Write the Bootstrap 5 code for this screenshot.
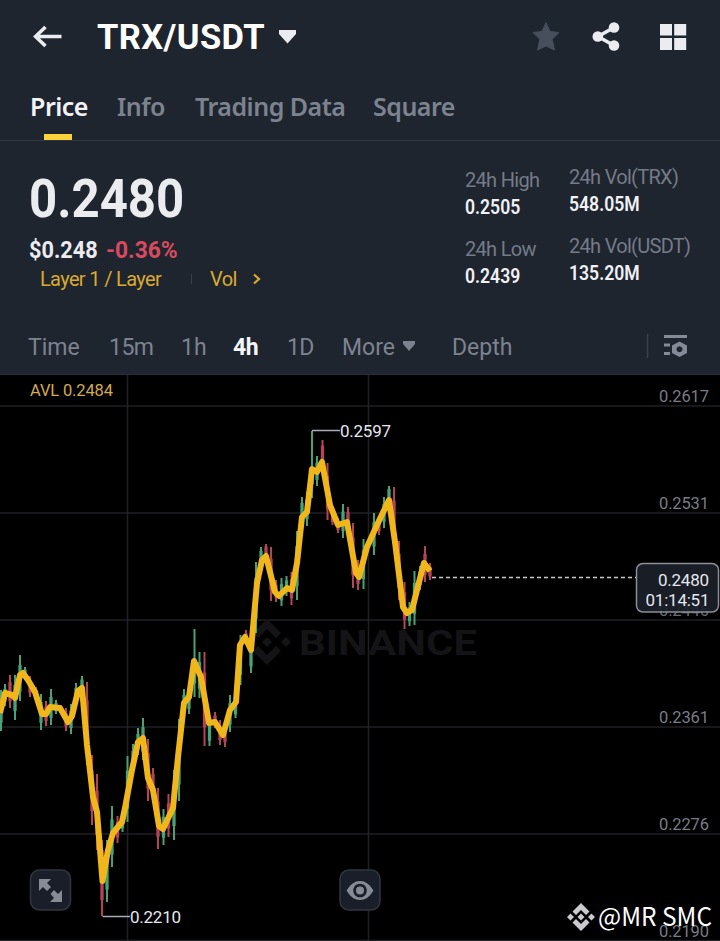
<!DOCTYPE html>
<html lang="en" data-bs-theme="dark">
<head>
<meta charset="utf-8">
<meta name="viewport" content="width=device-width, initial-scale=1">
<title>TRX/USDT</title>
<link href="https://cdn.jsdelivr.net/npm/bootstrap@5.3.0/dist/css/bootstrap.min.css" rel="stylesheet">
<style>
body{width:720px;height:941px;overflow:hidden;background:#000;font-family:Roboto,"Liberation Sans",sans-serif;color:#eaecef;line-height:1}
.panel{background:#1f252f;height:375px;border-bottom:1px solid #2a2f39}
.topbar{height:74px;padding:0 33px}
.pair{font-size:34.5px;font-weight:700;color:#fff;margin-left:35px;width:166px;white-space:nowrap;letter-spacing:.4px;padding-top:2px}
.tabs{height:67px;padding:0 30px;border-bottom:1px solid #303641}
.tabs .nav-link{padding:18px 0 0;font:600 25px/28px "Noto Sans",sans-serif;letter-spacing:-.5px;color:#7c838f;position:relative;white-space:nowrap}
.tabs .t1{width:87px}.tabs .t2{width:78px}.tabs .t3{width:178px}
.tabs .nav-link.active{color:#f2f3f7}
.tabs .nav-link.active::after{content:"";position:absolute;left:14px;bottom:0;width:28px;height:6px;background:#f8d33a}
.summary{height:178px;padding:0 0 0 29px}
.squeeze{display:inline-block;transform-origin:left center;white-space:nowrap}
.last{font-size:54px;font-weight:700;line-height:58px;padding-top:29px;height:75px}
.last .squeeze{transform:scaleX(.91)}
.sub{font-size:24px;font-weight:700;line-height:28px;margin-top:20px}
.usd{width:77px}.usd .squeeze{transform:scaleX(.905)}
.chg{color:#d84a5f}.chg .squeeze{transform:scaleX(.95)}
.tags{font-size:20px;line-height:24px;color:#d9aa30;padding-left:11px;margin-top:3px}
.tags span{letter-spacing:-.65px;white-space:pre}
.stats{width:255px;font-size:20px;line-height:24px}
.stat-a{width:104px;padding-top:27px}.stat-b{padding-top:24px}
.stat-k{color:#747b87;white-space:nowrap;letter-spacing:-.7px}
.stat-v{font-weight:600;margin-top:3px;margin-bottom:18px;color:#f0f1f5}
.stat-v .squeeze{transform:scaleX(.88)}
.frames{height:55px;padding:1px 0 0 28px;font-size:23px;color:#7c838f;white-space:nowrap}
.frames .on{color:#f5f6fa;font-weight:700}
.f-time{width:81px}.f-15{width:72px;letter-spacing:-.5px}.f-1h{width:52px}.f-4h{width:54px;letter-spacing:-.5px}.f-1d{width:55px;letter-spacing:-.7px}.f-more{width:52px}
.frames .caret{margin:0 37px 2px 9px}
.chart{height:566px;display:block}
.chart text{font-family:Roboto,sans-serif}
.chart .handle{font-family:"Noto Sans CJK SC","Noto Sans",sans-serif}
</style>
</head>
<body>
<main class="d-flex flex-column">
<section class="panel">
  <header class="topbar d-flex align-items-center">
    <svg width="29" height="24" viewBox="0 0 29 24" fill="none" stroke="#eaecf2" stroke-width="3.6"><path d="M28.500 11.500H3M12.500 2 2.500 11.500l10 9.500"/></svg>
    <h1 class="pair mb-0">TRX/USDT</h1>
    <svg class="ms-3" width="17" height="14" viewBox="0 0 17 14"><path d="M0 0H17V4L8.500 13.500 0 4Z" fill="#eaecf2"/></svg>
    <div class="ms-auto d-flex align-items-center">
      <svg width="28" height="30" viewBox="0 .5 28 30" fill="#474e5c" stroke="#474e5c" stroke-linejoin="round"><path d="m14 1 4 9 9 1-6.800 6.800L22.500 28.500 14 24.500 5.500 28.500 7.800 17.800 1 11l9-1Z"/></svg>
      <svg class="ms-4" width="40" height="30" viewBox="-8 .5 40 30" fill="#eaecf2"><path d="M22 6 6 15l16 9" fill="none" stroke="#eaecf2" stroke-width="3.600"/><circle cx="5.800" cy="15" r="5.300"/><circle cx="22" cy="6" r="5.300"/><circle cx="22" cy="24" r="5.300"/></svg>
      <svg class="ms-4" width="39" height="27" viewBox="-12 .5 39 27" fill="#eaecf2"><path d="M0 0h12v12H0ZM14.200 0h12v12h-12ZM0 14.500h12v12H0ZM14.200 14.500h12v12h-12Z"/></svg>
    </div>
  </header>
  <nav class="tabs nav flex-nowrap">
    <a class="nav-link t1 active">Price</a><a class="nav-link t2">Info</a><a class="nav-link t3">Trading Data</a><a class="nav-link">Square</a>
  </nav>
  <div class="summary d-flex justify-content-between">
    <div>
      <div class="last"><span class="squeeze">0.2480</span></div>
      <div class="sub d-flex"><div class="usd"><span class="squeeze">$0.248</span></div><div class="chg"><span class="squeeze">-0.36%</span></div></div>
      <div class="tags d-flex align-items-center"><span>Layer 1 / Layer</span>
        <svg width="49" height="14" viewBox="0 0 49 14"><path d="M30.500 2v10" stroke="#3a404b"/></svg><span>Vol</span>
        <svg class="ms-3" width="8" height="12" viewBox="0 0 8 12" fill="none" stroke="#d9aa30" stroke-width="2.200"><path d="m1 1.500 5 4.500-5 4.500"/></svg></div>
    </div>
    <div class="stats d-flex">
      <div class="stat-a"><div class="stat-k">24h High</div><div class="stat-v"><span class="squeeze">0.2505</span></div><div class="stat-k">24h Low</div><div class="stat-v"><span class="squeeze">0.2439</span></div></div>
      <div class="stat-b"><div class="stat-k">24h Vol(TRX)</div><div class="stat-v"><span class="squeeze">548.05M</span></div><div class="stat-k">24h Vol(USDT)</div><div class="stat-v"><span class="squeeze">135.20M</span></div></div>
    </div>
  </div>
  <div class="frames d-flex align-items-center">
    <span class="f-time">Time</span><span class="f-15">15m</span><span class="f-1h">1h</span><span class="f-4h on">4h</span><span class="f-1d">1D</span><span class="f-more">More</span>
    <svg width="12" height="10" viewBox="0 0 12 10" class="caret"><path d="M0 0h12v3L6 10 0 3Z" fill="#7c838f"/></svg><span>Depth</span>
    <svg class="ms-auto me-4" width="57" height="28" viewBox="639 333 57 28"><path d="M648 334v24" stroke="#3a404b" stroke-width="1.500" transform="translate(-.5)"/><path d="M664 336.500h23M664 345h6M664 353.500h6" stroke="#858b97" stroke-width="3" fill="none"/><path fill-rule="evenodd" fill="#858b97" d="m679.500 341.500 7.500 4v7.500l-7.500 4-7.500-4v-7.500ZM679.500 346.300a3 3 0 1 0 .01 0Z"/></svg>
  </div>
</section>
<svg class="chart" width="720" height="566" viewBox="0 375 720 566">
  <path d="M0 406H720M0 513H720M0 620H720M0 727H720M0 834H720M0 940.500H720M127.500 375V941M368.500 375V941" stroke="#202126" stroke-width="1.500" fill="none"/>
  <g fill="#141416"><path d="m267 619 14 14-5 5-9-9-9 9-5-5ZM267 665l14-14-5-5-9 9-9-9-5 5ZM267 637l5 5-5 5-5-5ZM248 637l5 5-5 5-5-5ZM286 637l5 5-5 5-5-5Z"/><text x="299" y="655" font-size="35" font-weight="700" textLength="178" lengthAdjust="spacingAndGlyphs">BINANCE</text></g>
  <g id="candles"></g>
  <path d="M0 713 5 693 12 695 15 698 20 675 23 673 28 680 35 692 42 714 46 714 50 707 60 708 68 722 72 716 78 691 82 688 87 745 93 797 97 812 102.500 881 108 850 113 833 122 822 125 808 132 770 138 742 143 738 148 778 153 790 159 826 163 829 173 808 178 757 184 703 189 697 194 661 201 677 209 723 215 722 223 735 230 710 236 702 240 645 245 637 251 650 257 583 262 560 266 556 275 592 279 596 287 588 292 590 297 563 302 517 307 512 312 469 317 472 322 462 330 505 338 525 347 522 356 573 359 577 367 547 377 525 389 500 395 542 403 607 407 613 412 610 417 590 424 563 430 571" fill="none" stroke="#f0b71c" stroke-width="6" stroke-linejoin="round"/>
  <path d="M312 430.500H340M102.500 916.500H130" stroke="#a9abb5" stroke-width="1.500"/>
  <path d="M432 577.500H636" stroke="#c9cad0" stroke-width="1.300" stroke-dasharray="4 3"/>
  <g font-size="17" fill="#e6e7ee"><text x="340" y="437" textLength="51">0.2597</text><text x="130" y="923" textLength="51">0.2210</text></g>
  <text x="30" y="396" font-size="16.500" fill="#d3aa50" textLength="83">AVL 0.2484</text>
  <g font-size="16.500" fill="#787d86"><text x="659" y="402" textLength="50">0.2617</text><text x="659" y="509" textLength="50">0.2531</text><text x="659" y="616" textLength="50" fill="#686c74">0.2446</text><text x="659" y="723" textLength="50">0.2361</text><text x="659" y="830" textLength="50">0.2276</text><text x="659" y="937" textLength="50">0.2190</text></g>
  <rect x="636.500" y="563.500" width="82" height="48.500" rx="6.500" fill="#1b202a" fill-opacity=".9" stroke="#8b8e96" stroke-width="1.500"/>
  <g font-size="17" fill="#e6e7ee"><text x="658" y="586" textLength="51">0.2480</text><text x="645.500" y="606" textLength="64">01:14:51</text></g>
  <g fill="#191e28" stroke="#303641" stroke-width="1.500"><rect x="30.500" y="870" width="40" height="40" rx="9"/><rect x="340" y="870" width="40" height="40" rx="9"/></g>
  <path d="M39 879h12l-4 4 4 4-4 4-4-4-4 4ZM62 902V890l-4 4-4-4-3.500 4 3.500 4-4 4Z" fill="#868b96"/>
  <path fill-rule="evenodd" fill="#868b96" d="M346.500 890.500Q352 881 360 881T373.500 890.500Q368 900 360 900T346.500 890.500ZM360 883.700a6.800 6.800 0 1 0 .01 0Z"/><circle cx="360" cy="890.500" r="4" fill="#868b96"/>
  <path d="m581 903 8.500 8.500-3.500 3.500-5-5-5 5-3.500-3.500ZM581 931l8.500-8.500-3.500-3.500-5 5-5-5-3.500 3.500ZM581 913.500l3.500 3.500-3.500 3.500-3.500-3.500ZM570.500 913.500l3.500 3.500-3.500 3.500-3.500-3.500ZM591.500 913.500l3.500 3.500-3.500 3.500-3.500-3.500Z" fill="#c9cbd0"/>
  <text class="handle" x="598" y="926" font-size="25" fill="#fff" textLength="114" lengthAdjust="spacingAndGlyphs">@MR SMC</text>
</svg>
</main>
<script>
// x, high, low, direction (1 = rising)
const candles=[[1,690,731,1],[5,684,706,1],[10,675,708,0],[15,675,720,1],[20,655,701,1],[25,667,680,1],[30,676,697,0],[36,687,702,0],[41,694,730,1],[46,701,726,0],[51,689,725,1],[56,700,714,1],[61,705,714,0],[66,708,731,0],[71,704,734,1],[76,683,706,1],[82,676,692,1],[87,682,765,0],[92,755,825,0],[97,774,850,0],[102,840,916,0],[107,840,902,1],[112,806,867,1],[117.5,816,843,0],[122.5,814,832,1],[127.5,756,822,1],[133,744,775,1],[138,728,755,1],[143,718,760,1],[148,739,801,0],[153,768,795,0],[158,788,849,0],[163.5,809,845,1],[168.5,794,837,0],[174,770,840,1],[179,719,801,1],[184,689,715,1],[189,688,714,1],[194.5,629,697,1],[199.5,652,698,1],[204.5,652,746,0],[209.5,720,746,1],[215,712,728,0],[220,720,745,0],[225,722,747,0],[230,695,732,1],[235.5,700,718,1],[240.5,635,685,1],[246,630,645,0],[251,640,673,1],[256,562,633,1],[261,547,565,1],[266,544,556,0],[271,547,601,0],[276,580,602,0],[281.5,578,606,1],[286.5,576,596,1],[291.5,572,605,0],[297,531,600,1],[302,497,524,1],[307,492,526,1],[312,431,498,1],[317,456,486,1],[322.5,440,465,0],[327.5,463,520,0],[332.5,510,525,0],[338,518,533,0],[343,504,538,1],[348,507,530,0],[353,523,588,0],[358,560,590,0],[363.5,539,589,1],[374,513,555,1],[379,515,535,0],[384,497,528,1],[389,486,500,1],[394,487,548,0],[399,541,600,0],[404.5,582,629,0],[409.5,602,626,1],[414.5,571,625,1],[420,566,590,1],[425,546,582,0],[430,563,580,0]];
document.getElementById('candles').innerHTML=candles.map(([x,h,l,up])=>{
  const c=up?'#48a277':'#b64458',d=l-h;
  return `<path d="M${x} ${h}V${l}" stroke="${c}" stroke-width="2"/><path d="M${x} ${x===312?470:x===194.5?665:x===102?850:h+d*.22}V${x===102?900:l-d*.2}" stroke="${c}" stroke-width="3.3"/>`;
}).join('');
</script>
<script src="https://cdn.jsdelivr.net/npm/bootstrap@5.3.0/dist/js/bootstrap.bundle.min.js"></script>
</body>
</html>
